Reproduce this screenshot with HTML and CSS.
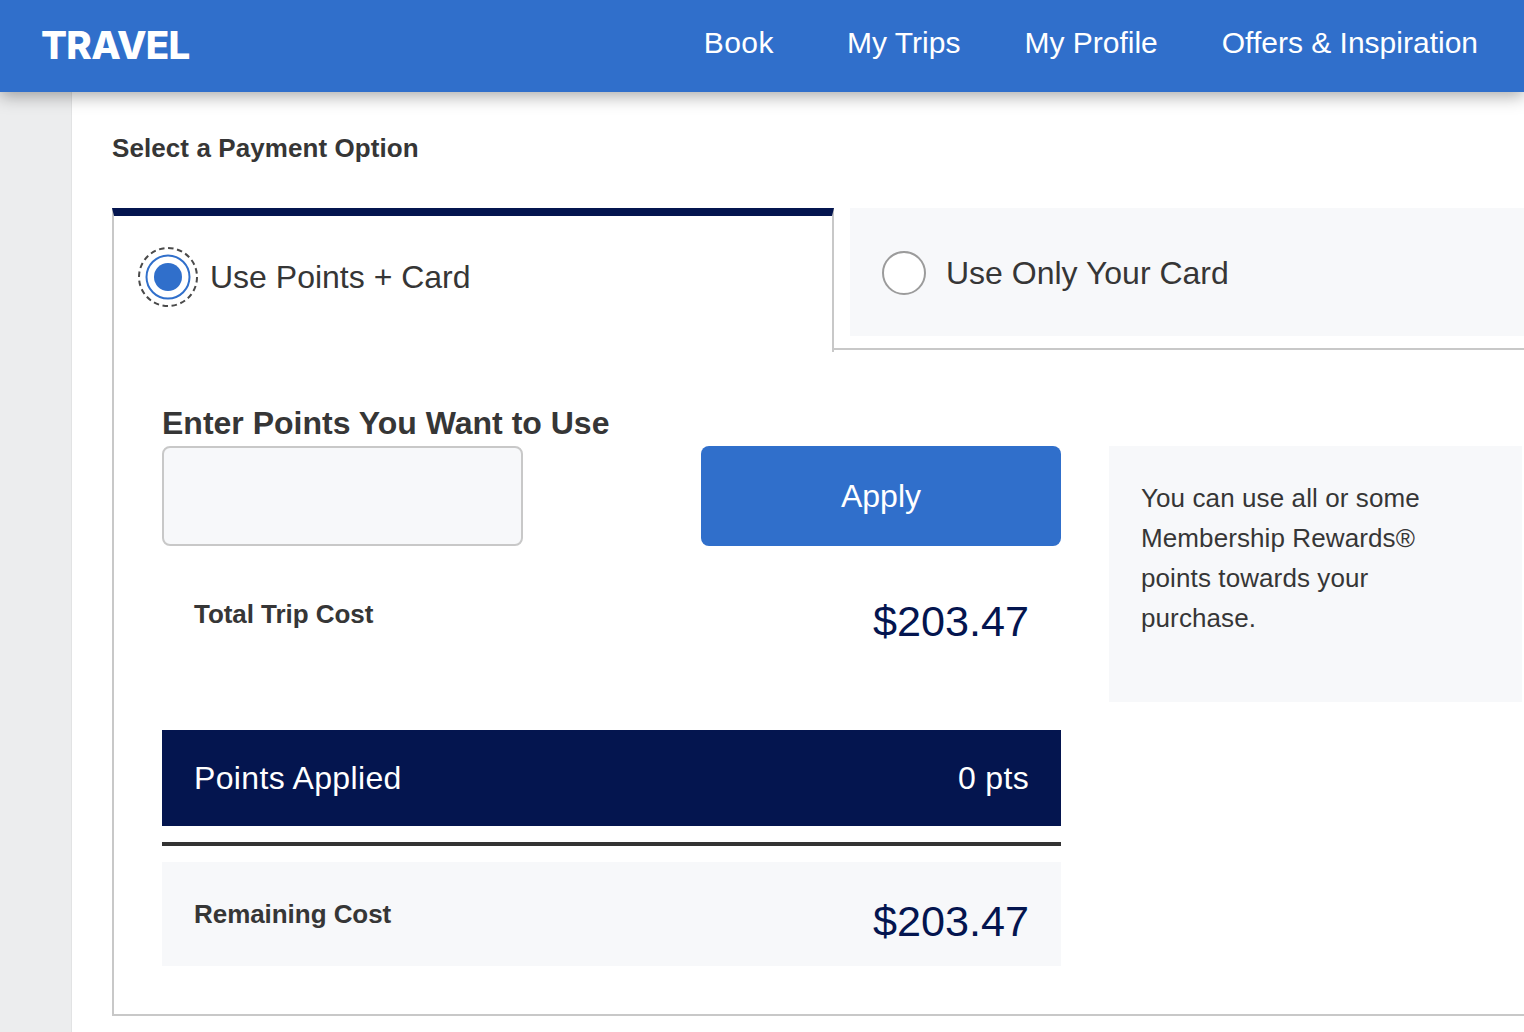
FILE: index.html
```html
<!DOCTYPE html>
<html lang="en">
<head>
<meta charset="utf-8">
<title>Travel - Payment</title>
<link rel="stylesheet" href="styles.css">
</head>
<body>
<header class="topbar">
  <div class="logo">TRAVEL</div>
  <nav class="nav">
    <a class="nav-link nav-book">Book</a>
    <a class="nav-link">My Trips</a>
    <a class="nav-link">My Profile</a>
    <a class="nav-link">Offers &amp; Inspiration</a>
  </nav>
</header>
<div class="page">
  <aside class="rail"></aside>
  <main class="content">
    <h1 class="title">Select a Payment Option</h1>
    <div class="tabs">
      <div class="tab tab-active">
        <svg class="radio-on" width="62" height="62" viewBox="0 0 62 62" aria-hidden="true">
          <circle cx="31" cy="31" r="29" fill="#fff" stroke="#4a4a4a" stroke-width="2" stroke-dasharray="5.5 3.6"/>
          <circle cx="31" cy="31" r="21.5" fill="#fff" stroke="#306fcb" stroke-width="2"/>
          <circle cx="31" cy="31" r="14" fill="#306fcb"/>
        </svg>
        <span class="tab-label">Use Points + Card</span>
      </div>
      <div class="tab-rest">
        <div class="tab tab-idle">
          <span class="radio-off"></span>
          <span class="tab-label">Use Only Your Card</span>
        </div>
      </div>
    </div>
    <section class="panel">
      <div class="calc">
        <h2 class="points-heading">Enter Points You Want to Use</h2>
        <div class="entry">
          <input class="points-input" type="text" aria-label="Points">
          <button class="apply" type="button">Apply</button>
        </div>
        <div class="cost-row trip">
          <span class="cost-label">Total Trip Cost</span>
          <span class="cost-value">$203.47</span>
        </div>
        <div class="applied">
          <span class="applied-label">Points Applied</span>
          <span class="applied-value">0 pts</span>
        </div>
        <div class="rule"></div>
        <div class="cost-row remaining">
          <span class="cost-label">Remaining Cost</span>
          <span class="cost-value">$203.47</span>
        </div>
      </div>
      <aside class="info">You can use all or some Membership Rewards® points towards your purchase.</aside>
    </section>
  </main>
</div>
</body>
</html>
```
FILE: styles.css
```css
* { box-sizing: border-box; }
html, body { margin: 0; height: 1032px; overflow: hidden; }
body {
  font-family: "Liberation Sans", Arial, sans-serif;
  color: #363636;
  background: #fff;
}
.topbar {
  position: relative;
  z-index: 2;
  height: 92px;
  background: #306fcb;
  color: #fff;
  display: flex;
  align-items: center;
  justify-content: space-between;
  padding: 0 46px 0 41px;
  box-shadow: 0 4px 16px rgba(0, 0, 0, .34);
}
.logo {
  font-family: Inter, "Liberation Sans", sans-serif;
  font-weight: 800;
  font-size: 38.5px;
  letter-spacing: -.7px;
  line-height: 1;
  margin-top: -2px;
}
.nav { display: flex; gap: 64px; margin-top: -6px; }
.nav-link { font-size: 30px; line-height: 36px; }
.nav-book { margin-right: 9px; letter-spacing: .5px; }
.page { display: flex; height: 940px; }
.rail {
  width: 72px;
  background: #ecedee;
  border-right: 1px solid #e2e3e4;
  flex: none;
}
.content { flex: 1; padding: 40px 0 0 40px; min-width: 0; }
.title {
  margin: 0 0 44px;
  font-size: 26px;
  line-height: 32px;
  font-weight: 700;
  letter-spacing: .08px;
}
.tabs { display: flex; height: 144px; }
.tab { display: flex; align-items: center; }
.tab-label { font-size: 32px; line-height: 40px; }
.tab-active {
  width: 722px;
  flex: none;
  border-top: 8px solid #04154f;
  border-left: 2px solid #c8c8c8;
  border-right: 2px solid #c8c8c8;
  padding: 30px 0 0 23px;
  align-items: flex-start;
  gap: 11px;
}
.tab-active .tab-label { margin-top: 11px; }
.tab-rest {
  flex: 1;
  height: 142px;
  padding-left: 16px;
  border-bottom: 2px solid #c8c8c8;
}
.tab-idle {
  height: 128px;
  background: #f7f8fa;
  padding: 2px 0 0 32px;
  gap: 20px;
}
.radio-on { flex: none; display: block; }
.radio-off {
  width: 44px;
  height: 44px;
  border-radius: 50%;
  background: #fff;
  border: 2px solid #9b9b9b;
  flex: none;
}
.panel {
  height: 664px;
  border-left: 2px solid #c8c8c8;
  border-bottom: 2px solid #c8c8c8;
  padding: 48px 2px 0 48px;
  display: flex;
  align-items: flex-start;
  gap: 48px;
}
.calc { width: 899px; flex: none; }
.points-heading {
  margin: 0;
  font-size: 32px;
  line-height: 46px;
  font-weight: 700;
}
.entry { display: flex; justify-content: space-between; }
.points-input {
  width: 361px;
  height: 100px;
  background: #f7f8fa;
  border: 2px solid #c8c8c8;
  border-radius: 8px;
  padding: 0 16px;
}
.apply {
  width: 360px;
  height: 100px;
  background: #306fcb;
  color: #fff;
  border: 0;
  border-radius: 8px;
  font: 32px/40px "Liberation Sans", Arial, sans-serif;
}
.cost-row {
  display: flex;
  justify-content: space-between;
  align-items: flex-start;
  padding: 0 32px;
}
.trip { height: 184px; padding-top: 52px; }
.remaining { height: 104px; background: #f7f8fa; padding-top: 36px; }
.cost-label { font-size: 26px; line-height: 32px; font-weight: 700; letter-spacing: -.05px; }
.cost-value { font-size: 43.2px; line-height: 56px; color: #04154f; margin-top: -5px; }
.applied {
  height: 96px;
  background: #04154f;
  color: #fff;
  display: flex;
  align-items: center;
  justify-content: space-between;
  padding: 0 32px;
  font-size: 32px;
  letter-spacing: .35px;
}
.rule { height: 4px; background: #333; margin: 16px 0; }
.info {
  width: 413px;
  height: 256px;
  margin-top: 46px;
  background: #f7f8fa;
  padding: 32px 60px 32px 32px;
  font-size: 26px;
  line-height: 40px;
  letter-spacing: .1px;
}
```
